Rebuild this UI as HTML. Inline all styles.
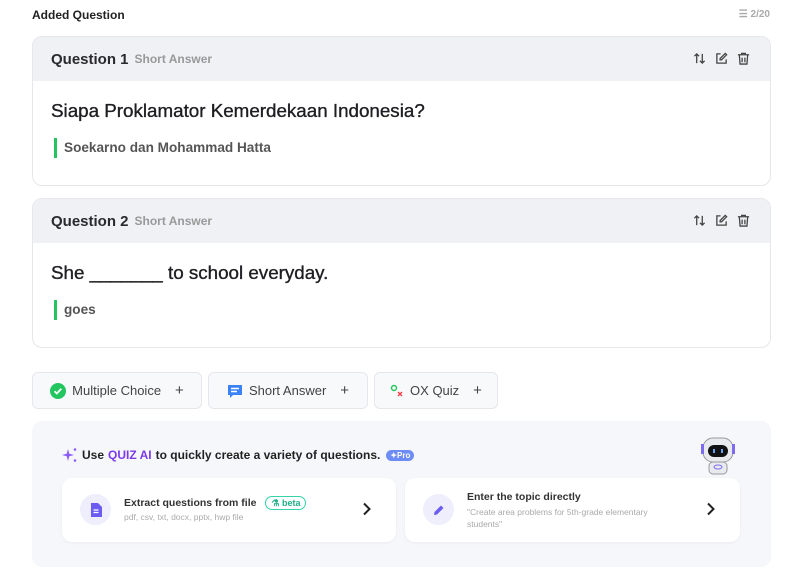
<!DOCTYPE html>
<html><head><meta charset="utf-8"><style>
*{box-sizing:border-box;margin:0;padding:0}
body{width:800px;height:573px;background:#fff;font-family:"Liberation Sans",sans-serif;color:#222;position:relative;overflow:hidden}
.abs{position:absolute}
.title{left:32px;top:8px;font-size:12px;font-weight:bold;color:#222}
.count{right:30px;top:9px;font-size:10px;color:#aaa;font-weight:bold}
.card{left:32px;width:739px;height:150px;border:1px solid #e6e7eb;border-radius:10px;overflow:hidden;background:#fff}
.hd{height:44px;background:#f0f1f4;display:flex;align-items:center;padding-left:18px}
.hd b{font-size:15px;color:#2a2a2e}
.hd span{font-size:12px;color:#999;font-weight:bold;margin-left:6px}
.icons{position:absolute;right:20px;top:15px;display:flex;gap:9px}
.q{position:absolute;left:18px;top:63px;font-size:18.8px;color:#1e1e22;-webkit-text-stroke:0.35px #1e1e22}
.ans{position:absolute;left:21px;top:101px;height:20px;border-left:3px solid #22c55e;padding-left:7px;font-size:13.6px;font-weight:bold;color:#555;line-height:20px}
.btn{top:372px;height:37px;border:1px solid #e6e7eb;border-radius:6px;background:#f8f9fb;display:flex;align-items:center;justify-content:center;font-size:13px;color:#444;gap:6px}
.panel{left:32px;top:421px;width:739px;height:146px;background:#f6f7fb;border-radius:10px}
.sub{top:478px;height:64px;background:#fff;border-radius:10px;box-shadow:0 1px 3px rgba(0,0,0,.05)}
.circ{position:absolute;left:18px;top:16px;width:31px;height:31px;border-radius:50%;background:#eeeefc;display:flex;align-items:center;justify-content:center}
.chev{position:absolute;right:24px;top:24px}
</style></head><body>
<div class="abs title">Added Question</div>
<div class="abs count">☰ 2/20</div>

<div class="abs card" style="top:36px">
 <div class="hd"><b>Question 1</b><span>Short Answer</span></div>
 <div class="icons">
  <svg width="13" height="13" viewBox="0 0 14 14" fill="none" stroke="#444" stroke-width="1.4"><path d="M4 12V2M1.5 4.5L4 2l2.5 2.5M10 2v10M7.5 9.5L10 12l2.5-2.5"/></svg>
  <svg width="13" height="13" viewBox="0 0 14 14" fill="none" stroke="#444" stroke-width="1.4"><path d="M6 2H2v10h10V8M11 1.5l1.5 1.5L7 8.5H5.5V7z"/></svg>
  <svg width="13" height="13" viewBox="0 0 14 14" fill="none" stroke="#444" stroke-width="1.4"><path d="M1 3h12M5 3V1.5h4V3M2.5 3l.8 10h7.4l.8-10M5.5 6v5M8.5 6v5"/></svg>
 </div>
 <div class="q">Siapa Proklamator Kemerdekaan Indonesia?</div>
 <div class="ans">Soekarno dan Mohammad Hatta</div>
</div>

<div class="abs card" style="top:198px">
 <div class="hd"><b>Question 2</b><span>Short Answer</span></div>
 <div class="icons">
  <svg width="13" height="13" viewBox="0 0 14 14" fill="none" stroke="#444" stroke-width="1.4"><path d="M4 12V2M1.5 4.5L4 2l2.5 2.5M10 2v10M7.5 9.5L10 12l2.5-2.5"/></svg>
  <svg width="13" height="13" viewBox="0 0 14 14" fill="none" stroke="#444" stroke-width="1.4"><path d="M6 2H2v10h10V8M11 1.5l1.5 1.5L7 8.5H5.5V7z"/></svg>
  <svg width="13" height="13" viewBox="0 0 14 14" fill="none" stroke="#444" stroke-width="1.4"><path d="M1 3h12M5 3V1.5h4V3M2.5 3l.8 10h7.4l.8-10M5.5 6v5M8.5 6v5"/></svg>
 </div>
 <div class="q">She _______ to school everyday.</div>
 <div class="ans">goes</div>
</div>

<div class="abs btn" style="left:32px;width:170px">
 <svg width="16" height="16" viewBox="0 0 16 16"><circle cx="8" cy="8" r="8" fill="#22c55e"/><path d="M4.5 8.2l2.3 2.3 4.5-4.7" stroke="#fff" stroke-width="1.8" fill="none"/></svg>Multiple Choice <span style="margin-left:8px;font-size:15px">+</span></div>
<div class="abs btn" style="left:208px;width:160px">
 <svg width="16" height="16" viewBox="0 0 16 16"><path d="M1 2h14v10H6l-3 3v-3H1z" fill="#3b82f6"/><path d="M4 5.5h8M4 8.5h6" stroke="#fff" stroke-width="1.4"/></svg>Short Answer <span style="margin-left:8px;font-size:15px">+</span></div>
<div class="abs btn" style="left:374px;width:124px">
 <svg width="14" height="14" viewBox="0 0 14 14"><circle cx="4" cy="4" r="2.5" stroke="#22c55e" stroke-width="1.4" fill="none"/><path d="M8 8l4 4M12 8l-4 4" stroke="#ef4444" stroke-width="1.4"/></svg>OX Quiz <span style="margin-left:8px;font-size:15px">+</span></div>

<div class="abs panel"></div>
<div class="abs" style="left:62px;top:447px;font-size:12px;font-weight:bold;color:#222;display:flex;align-items:center;gap:4px">
 <svg width="16" height="16" viewBox="0 0 16 16" fill="#8b5cf6"><path d="M6 2l1.3 4.7L12 8l-4.7 1.3L6 14l-1.3-4.7L0 8l4.7-1.3z"/><circle cx="13" cy="2.5" r="1.3"/><circle cx="13" cy="13.5" r="1.3"/></svg>
 Use <span style="color:#7c3aed">QUIZ AI</span> to quickly create a variety of questions.
 <span style="background:#6d8cf5;color:#fff;font-size:8px;border-radius:8px;padding:1px 4px;margin-left:2px">✦Pro</span>
</div>
<div class="abs" style="left:699px;top:436px;width:38px;height:40px">
 <svg width="38" height="40" viewBox="0 0 38 40"><rect x="4" y="2" width="30" height="24" rx="10" fill="#e8eaf0" stroke="#999" stroke-width="1"/><rect x="9" y="9" width="20" height="12" rx="6" fill="#111"/><rect x="14" y="13" width="2" height="4" fill="#6aa0ff"/><rect x="22" y="13" width="2" height="4" fill="#6aa0ff"/><rect x="10" y="26" width="18" height="12" rx="4" fill="#e8eaf0" stroke="#999"/><ellipse cx="19" cy="31" rx="4" ry="2" fill="none" stroke="#7c6cf0"/><rect x="2" y="8" width="3" height="10" fill="#7c6cf0"/><rect x="33" y="8" width="3" height="10" fill="#7c6cf0"/></svg>
</div>

<div class="abs sub" style="left:62px;width:334px">
 <div class="circ"><svg width="12" height="14" viewBox="0 0 12 14"><path d="M1 0h7l4 4v10H1z" fill="#6d5cf0"/><path d="M3.5 7h5M3.5 9.5h5" stroke="#fff" stroke-width="1.2"/></svg></div>
 <div style="position:absolute;left:62px;top:18px;font-size:10.5px;font-weight:bold;color:#333">Extract questions from file <span style="display:inline-block;margin-left:6px;border:1px solid #34d3a8;border-radius:8px;padding:0 5px;color:#1fae88;font-size:9px;line-height:12px">⚗ beta</span></div>
 <div style="position:absolute;left:62px;top:34px;font-size:8.5px;color:#aaa">pdf, csv, txt, docx, pptx, hwp file</div>
 <svg class="chev" width="10" height="14" viewBox="0 0 10 14"><path d="M2 1.5L7.5 7 2 12.5" stroke="#222" stroke-width="2" fill="none"/></svg>
</div>
<div class="abs sub" style="left:405px;width:335px">
 <div class="circ"><svg width="12" height="12" viewBox="0 0 12 12"><path d="M1 11l.5-3L8 1.5 10.5 4 4 10.5z" fill="#6d5cf0"/></svg></div>
 <div style="position:absolute;left:62px;top:13px;font-size:10.5px;font-weight:bold;color:#333">Enter the topic directly</div>
 <div style="position:absolute;left:62px;top:28px;width:210px;font-size:8.5px;color:#aaa;line-height:12px">"Create area problems for 5th-grade elementary students"</div>
 <svg class="chev" width="10" height="14" viewBox="0 0 10 14"><path d="M2 1.5L7.5 7 2 12.5" stroke="#222" stroke-width="2" fill="none"/></svg>
</div>
</body></html>
